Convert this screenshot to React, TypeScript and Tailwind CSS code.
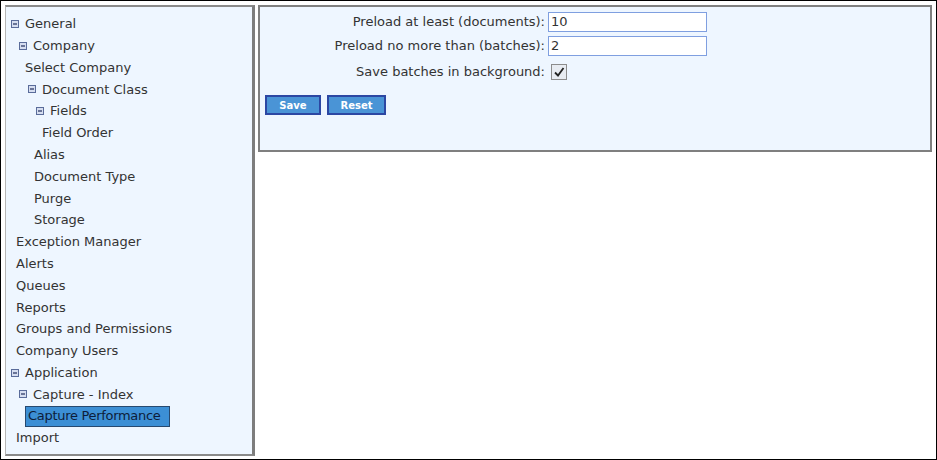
import React from "react";

const Minus = () => (
  <svg width="8" height="8" viewBox="0 0 8 8" className="shrink-0 mr-[6px]">
    <rect x="0.5" y="0.5" width="7" height="7" fill="#d6def0" stroke="#5a6c9a" />
    <line x1="2" y1="4" x2="6" y2="4" stroke="#2d3b66" strokeWidth="1.3" />
  </svg>
);

type Item = { label: string; pl: string; icon?: boolean; sel?: boolean };

const items: Item[] = [
  { label: "General", pl: "pl-[5px]", icon: true },
  { label: "Company", pl: "pl-[13px]", icon: true },
  { label: "Select Company", pl: "pl-[19px]" },
  { label: "Document Class", pl: "pl-[22px]", icon: true },
  { label: "Fields", pl: "pl-[30px]", icon: true },
  { label: "Field Order", pl: "pl-[36px]" },
  { label: "Alias", pl: "pl-[28px]" },
  { label: "Document Type", pl: "pl-[28px]" },
  { label: "Purge", pl: "pl-[28px]" },
  { label: "Storage", pl: "pl-[28px]" },
  { label: "Exception Manager", pl: "pl-[10px]" },
  { label: "Alerts", pl: "pl-[10px]" },
  { label: "Queues", pl: "pl-[10px]" },
  { label: "Reports", pl: "pl-[10px]" },
  { label: "Groups and Permissions", pl: "pl-[10px]" },
  { label: "Company Users", pl: "pl-[10px]" },
  { label: "Application", pl: "pl-[5px]", icon: true },
  { label: "Capture - Index", pl: "pl-[13px]", icon: true },
  { label: "Capture Performance", pl: "pl-[19px]", sel: true },
  { label: "Import", pl: "pl-[10px]" },
];

export default function App() {
  return (
    <div
      className="w-[937px] h-[460px] bg-white border border-black box-border flex items-start pt-[4px] pl-[4px] gap-[3px] text-[#333333] text-[13px]"
      style={{ fontFamily: '"DejaVu Sans", Verdana, sans-serif' }}
    >
      <div className="w-[250px] h-[451px] bg-[#eef6ff] border border-[#b5b5b5] border-r-[3px] border-r-[#7d7d7d] border-t-[2px] border-t-[#8a8a8a] border-b-[2px] border-b-[#8a8a8a] pt-[6px] box-border">
        {items.map((it) => (
          <div key={it.label} className={`h-[21.8px] flex items-center ${it.pl}`}>
            {it.icon && <Minus />}
            {it.sel ? (
              <span className="bg-[#3c8fd5] border border-[#27496f] text-[#0d1d3a] px-[2px] h-[21px] w-[145px] flex items-center tracking-[-0.3px]">
                {it.label}
              </span>
            ) : (
              <span>{it.label}</span>
            )}
          </div>
        ))}
      </div>
      <div className="w-[674px] h-[147px] bg-[#eef6ff] border-2 border-[#7f7f7f] box-border pt-[3px]">
        <div className="flex flex-col">
          <div className="flex items-center h-[24px]">
            <div className="w-[288px] text-right pr-[3px]">Preload at least (documents):</div>
            <div className="w-[159px] h-[20px] bg-white border border-[#7f9fe0] flex items-center pl-[2px]">10</div>
          </div>
          <div className="flex items-center h-[24px]">
            <div className="w-[288px] text-right pr-[3px]">Preload no more than (batches):</div>
            <div className="w-[159px] h-[20px] bg-white border border-[#7f9fe0] flex items-center pl-[2px]">2</div>
          </div>
          <div className="flex items-center h-[24px] mt-[2px]">
            <div className="w-[291px] text-right pr-[6px]">Save batches in background:</div>
            <div className="w-[16px] h-[16px] bg-[#e8ecf2] border border-[#8c8c8c] flex items-center justify-center">
              <svg width="12" height="12" viewBox="0 0 12 12">
                <path d="M2 6.5 L5 9.5 L10.5 2" fill="none" stroke="#222" strokeWidth="1.8" />
              </svg>
            </div>
          </div>
        </div>
        <div className="flex gap-[6px] pl-[5px] mt-[11px]">
          <button className="w-[56px] h-[20px] bg-[#4a94d6] border-2 border-[#2c47a3] text-white font-bold text-[10px] flex items-center justify-center">
            Save
          </button>
          <button className="w-[59px] h-[20px] bg-[#4a94d6] border-2 border-[#2c47a3] text-white font-bold text-[10px] flex items-center justify-center">
            Reset
          </button>
        </div>
      </div>
    </div>
  );
}
